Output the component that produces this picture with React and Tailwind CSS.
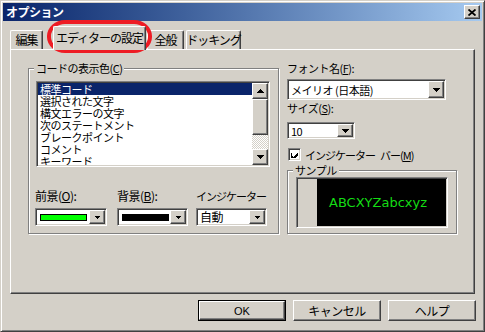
const raised =
  "border border-t-white border-l-white border-r-[#404040] border-b-[#404040] shadow-[inset_-1px_-1px_0_#808080]";
const sunken =
  "border border-t-[#808080] border-l-[#808080] border-r-white border-b-white shadow-[inset_1px_1px_0_#404040,inset_-1px_-1px_0_#d4d0c8] p-[1px]";
const etched = "border border-[#808080] shadow-[1px_1px_0_#fff,inset_1px_1px_0_#fff]";

function Arrow({ up = false, small = false }) {
  const w = small ? 5 : 7;
  const h = small ? 3 : 4;
  const pts = up ? `0,${h} ${w / 2},0 ${w},${h}` : `0,0 ${w},0 ${w / 2},${h}`;
  return (
    <svg width={w} height={h} viewBox={`0 0 ${w} ${h}`} shapeRendering="crispEdges">
      <polygon points={pts} fill="#000" />
    </svg>
  );
}

function Combo({ w, h, small, children }) {
  return (
    <div className={`${sunken} flex bg-white`} style={{ width: w, height: h }}>
      <div className="flex-1 flex items-center">{children}</div>
      <div className={`${raised} w-[16px] bg-[#d4d0c8] flex items-center justify-center`}>
        <Arrow small={small} />
      </div>
    </div>
  );
}

function Tab({ children, selected, className = "" }) {
  return (
    <div
      className={`border-t border-l border-r border-t-white border-l-white border-r-[#404040] shadow-[inset_-1px_0_0_#808080] rounded-t-[2px] bg-[#d4d0c8] flex justify-center ${
        selected ? "h-[24px] -mb-px relative z-10 pt-[5px]" : "h-[19px] pt-[3px]"
      } ${className}`}
    >
      {children}
    </div>
  );
}

const rows = ["標準コード", "選択された文字", "構文エラーの文字", "次のステートメント", "ブレークポイント", "コメント", "キーワード"];

export default function App() {
  return (
    <div className="relative w-[485px] h-[332px] bg-[#d4d0c8] border border-t-[#d4d0c8] border-l-[#d4d0c8] border-r-[#404040] border-b-[#404040] shadow-[inset_1px_1px_0_#fff,inset_-1px_-1px_0_#808080] p-[2px] text-[11px] leading-[12px] tracking-[-0.5px] whitespace-nowrap text-black font-['Noto_Sans_CJK_JP','Noto_Sans',sans-serif] overflow-hidden">
      {/* title bar */}
      <div className="h-[18px] flex items-center justify-between bg-linear-to-r from-[#0a246a] to-[#a6caf0]">
        <span className="pl-[3px] text-white font-bold text-[12px]">オプション</span>
        <div className={`${raised} w-[16px] h-[14px] bg-[#d4d0c8] mr-[2px] flex items-center justify-center`}>
          <svg width="8" height="7" viewBox="0 0 8 7">
            <path d="M0.5 0.5 L7.5 6.5 M7.5 0.5 L0.5 6.5" stroke="#000" strokeWidth="1.8" />
          </svg>
        </div>
      </div>

      {/* tabs */}
      <div className="mt-[5px] h-[23px] pl-[7px] flex items-end text-[12px] tracking-[-1px]">
        <Tab className="w-[33px]">編集</Tab>
        <Tab selected className="w-[93px] ml-[10px]">エディターの設定</Tab>
        <Tab className="w-[37px] ml-[1px]">全般</Tab>
        <Tab className="w-[55px] ml-[2px]">ドッキング</Tab>
      </div>

      {/* panel */}
      <div className="ml-[7px] w-[465px] h-[245px] border border-t-white border-l-white border-r-[#404040] border-b-[#404040] shadow-[inset_-1px_-1px_0_#808080] flex">
        {/* colour group */}
        <div className={`${etched} ml-[17px] mt-[18px] w-[251px] h-[166px]`}>
          <div className="-mt-[7px] ml-[5px] px-[2px] w-fit bg-[#d4d0c8] h-[12px]">
            コードの表示色(<span className="underline">C</span>)
          </div>
          <div className={`${sunken} ml-[7px] mt-[7px] w-[234px] h-[86px] bg-white flex`}>
            <div className="flex-1 overflow-hidden">
              {rows.map((r, i) => (
                <div
                  key={r}
                  className={`h-[12px] pl-[2px] ${i === 0 ? "bg-[#0a246a] text-white" : ""}`}
                >
                  {r}
                </div>
              ))}
            </div>
            <div className="w-[16px] flex flex-col">
              <div className={`${raised} h-[16px] bg-[#d4d0c8] flex items-center justify-center`}>
                <Arrow up />
              </div>
              <div className={`${raised} h-[36px] bg-[#d4d0c8]`} />
              <div className="flex-1 bg-[repeating-conic-gradient(#d4d0c8_0%_25%,#ffffff_0%_50%)] bg-[length:2px_2px]" />
              <div className={`${raised} h-[16px] bg-[#d4d0c8] flex items-center justify-center`}>
                <Arrow />
              </div>
            </div>
          </div>
          <div className="mt-[23px] ml-[6px] flex h-[12px]">
            <div className="w-[82px] text-[12px]">
              前景(<span className="underline">O</span>):
            </div>
            <div className="w-[79px] text-[12px]">
              背景(<span className="underline">B</span>):
            </div>
            <div className="tracking-[-1px]">インジケーター</div>
          </div>
          <div className="mt-[6px] ml-[6px] flex">
            <div className="w-[82px]">
              <Combo w={72} h={18} small>
                <div className="ml-[3px] w-[47px] h-[7px] bg-[#00ff00] border border-black" />
              </Combo>
            </div>
            <div className="w-[79px]">
              <Combo w={71} h={18} small>
                <div className="ml-[3px] w-[47px] h-[7px] bg-black" />
              </Combo>
            </div>
            <Combo w={71} h={18} small>
              <span className="pl-[2px] text-[12px]">自動</span>
            </Combo>
          </div>
        </div>

        {/* font column */}
        <div className="ml-[8px] mt-[12px] flex flex-col">
          <div className="h-[12px]">
            フォント名(<span className="underline">F</span>):
          </div>
          <div className="mt-[5px]">
            <Combo w={159} h={21}>
              <span className="pl-[2px]">メイリオ (日本語)</span>
            </Combo>
          </div>
          <div className="mt-[2px] h-[12px]">
            サイズ(<span className="underline">S</span>):
          </div>
          <div className="mt-[8px]">
            <Combo w={68} h={17}>
              <span className="pl-[2px]">10</span>
            </Combo>
          </div>
          <div className="mt-[9px] h-[13px] flex items-center">
            <div className="ml-[1px] w-[13px] h-[13px] border border-t-[#808080] border-l-[#808080] border-r-white border-b-white shadow-[inset_1px_1px_0_#404040,inset_-1px_-1px_0_#d4d0c8] bg-white flex items-center justify-center">
              <svg width="7" height="7" viewBox="0 0 7 7" shapeRendering="crispEdges">
                <path d="M0 2h1v3h1v1h1v-1h1v-1h1v-1h1v-1h1v3h-1v1h-1v1h-1v1h-1v1h-1v-1h-1v-1h-1z" fill="#000" />
              </svg>
            </div>
            <span className="ml-[4px] tracking-[-1px]">インジケーター</span>
            <span className="ml-[5px] tracking-[-1px]">
              バー(<span className="underline">M</span>)
            </span>
          </div>
          <div className={`${etched} mt-[9px] w-[170px] h-[64px]`}>
            <div className="-mt-[7px] ml-[5px] px-[2px] w-fit bg-[#d4d0c8] h-[12px]">サンプル</div>
            <div className={`${sunken} mt-[1px] ml-[8px] w-[152px] h-[51px] flex`}>
              <div className="w-[19px]" />
              <div className="flex-1 bg-black flex items-center pl-[12px]">
                <span className="text-[13px] leading-[13px] tracking-normal text-[#14dc14] font-['DejaVu_Sans',sans-serif]">
                  ABCXYZabcxyz
                </span>
              </div>
            </div>
          </div>
        </div>
      </div>

      {/* buttons */}
      <div className="mt-[6px] flex justify-end gap-[7px] pr-[6px] text-[12px]">
        <div className="w-[88px] h-[21px] border border-black">
          <div className={`${raised} h-full flex items-center justify-center tracking-normal font-['Liberation_Sans',sans-serif] text-[11px]`}>OK</div>
        </div>
        <div className={`${raised} w-[88px] h-[21px] flex items-center justify-center`}>キャンセル</div>
        <div className={`${raised} w-[88px] h-[21px] flex items-center justify-center`}>ヘルプ</div>
      </div>

      {/* red highlight around the selected tab */}
      <div className="absolute left-[46px] top-[19px] w-[105px] h-[33px] border-[4px] border-[#ee1c24] rounded-[18px/16px] pointer-events-none" />
    </div>
  );
}
